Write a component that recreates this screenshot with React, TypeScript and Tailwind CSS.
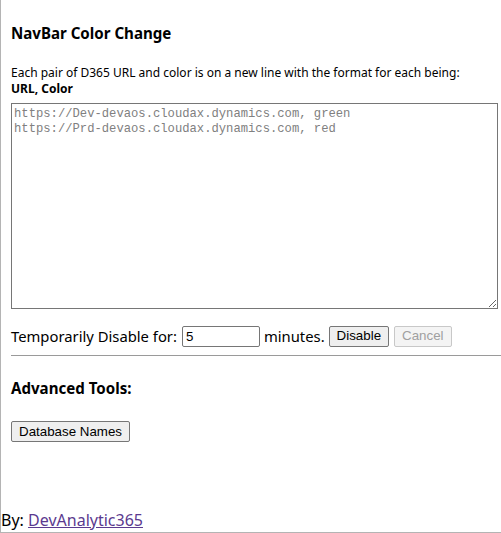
import { useState } from "react"

const sans = "font-['Segoe_UI','Noto_Sans',sans-serif]"
const btn =
  "h-[21px] px-[7px] rounded-[2px] border border-[#767676] bg-[#efefef] text-[13.33px] leading-none text-black font-['Liberation_Sans',Arial,sans-serif]"

export default function App() {
  const [minutes, setMinutes] = useState("5")

  return (
    <div className={`w-[501px] h-[533px] bg-white border-l border-b border-[#b4b4b4] flex flex-col text-black ${sans}`}>
      <div className="pl-[10px] flex flex-col">
        {/* Nav bar colours */}
        <h2 className="mt-[23px] text-[15.1px] leading-[20px] font-bold">NavBar Color Change</h2>

        <p className="mt-[22px] text-[12px] leading-[16px]">
          Each pair of D365 URL and color is on a new line with the format for each being:
          <br />
          <b>URL, Color</b>
        </p>

        <textarea
          className="mt-[6px] w-[487px] h-[206px] border border-[#767676] px-[2px] pt-[3px] text-[12.2px] leading-[15px] resize-y outline-none placeholder:text-[#808080] font-['Liberation_Mono','DejaVu_Sans_Mono',monospace]"
          placeholder={"https://Dev-devaos.cloudax.dynamics.com, green\nhttps://Prd-devaos.cloudax.dynamics.com, red"}
        />

        {/* Temporary disable */}
        <div className="mt-[16px] flex items-center h-[22px] text-[14.8px]">
          <span>Temporarily Disable for:</span>
          <input
            value={minutes}
            onChange={(e) => setMinutes(e.target.value)}
            className="ml-[5px] w-[78px] h-[21px] border border-[#767676] rounded-[2px] px-[3px] text-[13.33px] outline-none font-['Liberation_Sans',Arial,sans-serif]"
          />
          <span className="ml-[4px]">minutes.</span>
          <button className={`ml-[4px] ${btn}`}>Disable</button>
          <button disabled className={`ml-[5px] ${btn} !border-[#c8c8c8] !bg-[#f4f4f4] !text-[#a0a0a0]`}>
            Cancel
          </button>
        </div>

        <hr className="mt-[8px] border-t border-[#9a9a9a]" />

        <h3 className="mt-[22px] text-[15.1px] leading-[20px] font-bold">Advanced Tools:</h3>

        <div className="mt-[20px]">
          <button className={btn}>Database Names</button>
        </div>
      </div>

      <div className="mt-auto mb-[2px] text-[16px] leading-[20px]">
        By:{" "}
        <a href="#" className="text-[#5b3a8f] underline">
          DevAnalytic365
        </a>
      </div>
    </div>
  )
}
